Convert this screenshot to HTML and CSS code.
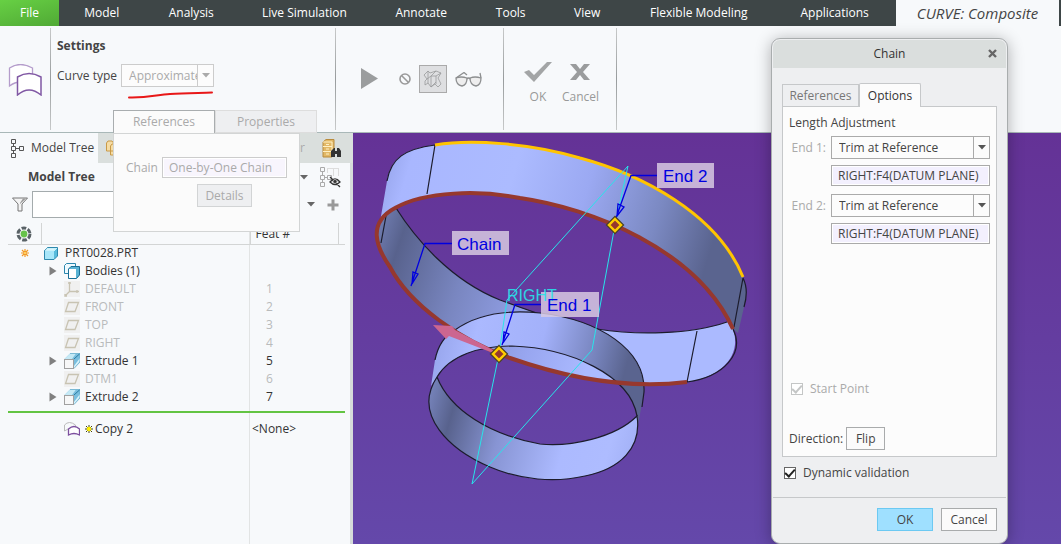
FILE: index.html
```html
<!DOCTYPE html>
<html lang="en">
<head>
<meta charset="utf-8">
<title>CURVE: Composite</title>
<link rel="stylesheet" href="styles.css">
</head>
<body>
<svg class="defs" width="0" height="0" aria-hidden="true">
  <defs>
    <symbol id="plane" viewBox="0 0 16 16"><rect width="16" height="16" fill="#f0f0f0"/><path d="M4.500 3.500H14.500L11 12.500H1.500Z" fill="none" stroke="#c8c3b2" stroke-width="1.300"/></symbol>
    <symbol id="extrude" viewBox="0 0 16 16"><path d="M6 .5H16V9L10 15V6H.5Z" fill="#79bede"/><path d="M.5 6L6 .5H12L8 6Z" fill="#c5e9f5"/><path d="M10 6L16 .5" stroke="#2c7ba0"/><path d="M10 13L16 5V8L10 15Z" fill="#d9f3fa"/><path d="M6 .5H16V9L10 15.500" fill="none" stroke="#5fa9c9" stroke-width=".7"/><rect x=".5" y="6.500" width="9" height="9" fill="#f7f7f7" stroke="#a0a0a0"/></symbol>
    <symbol id="tri" viewBox="0 0 8 10"><path d="M.5 .5L7.500 5L.5 9.500Z" fill="#808080"/></symbol>
    <symbol id="down" viewBox="0 0 8 5"><path d="M0 0H8L4 4.500Z" fill="currentColor"/></symbol>
  </defs>
</svg>
<div class="app">
  <nav class="menu">
    <a class="file" href="#">File</a><a href="#">Model</a><a href="#">Analysis</a><a href="#">Live Simulation</a><a href="#">Annotate</a><a href="#">Tools</a><a href="#">View</a><a href="#">Flexible Modeling</a><a href="#">Applications</a><a class="current" href="#">CURVE: Composite</a>
  </nav>

  <header class="ribbon">
    <div class="group feature">
      <svg width="34" height="32" viewBox="0 0 34 32" fill="none"><path d="M1.500 22V4Q12-3 24.500 4V22Q12 14 1.500 22Z" fill="#fff" stroke="#b49ccb" stroke-width="1.300"/><path d="M9.500 31V13Q21 6 33 13V31Q21 21 9.500 31Z" fill="#fff" stroke="#8058a4" stroke-width="1.500"/></svg>
    </div>
    <div class="group settings">
      <h2>Settings</h2>
      <div class="line">
        <label for="ctype">Curve type</label>
        <span class="combo off"><select id="ctype" disabled><option>Approximate</option></select><i><svg width="8" height="5"><use href="#down"/></svg></i></span>
      </div>
      <svg class="mark" width="86" height="8" viewBox="0 0 86 8"><path d="M1 6.500C20 7 28 4 42 3S70 2 84 1.500" fill="none" stroke="#e81818" stroke-width="2" stroke-linecap="round"/></svg>
      <div class="tabs">
        <button class="on" type="button">References</button><button type="button">Properties</button>
        <div class="slide">
          <div class="line"><label for="chain">Chain</label><input id="chain" class="collector" value="One-by-One Chain" disabled></div>
          <button class="details" type="button" disabled>Details</button>
        </div>
      </div>
    </div>
    <div class="group preview">
      <button type="button" aria-label="Resume"><svg width="17" height="22" viewBox="0 0 17 22"><path d="M0 0L17 10.500L0 21Z" fill="#9b9d9e"/></svg></button>
      <button class="none" type="button" aria-label="No preview"><svg width="12" height="12" viewBox="0 0 12 12" fill="none" stroke="#9a9a9a" stroke-width="1.600"><circle cx="6" cy="6" r="5"/><path d="M2.500 2.500L9.500 9.500"/></svg></button>
      <button type="button" class="pressed" aria-label="Feature preview"><svg width="20" height="18" viewBox="0 0 20 18" fill="none" stroke="#999b9c" stroke-width=".8"><path d="M1 5L5 1L7 3L13 1L18 3M18 14L15 17L12 14L8 17L5 13L2 15V11L4 9L1 5M5 1V13M8 6V17M8 6L13 1M13 12L8 17M13 6L18 3M13 6V14M4 9L8 6H13M18 3L15 8L18 14"/></svg></button>
      <button type="button" aria-label="Glasses"><svg width="27" height="15" viewBox="0 0 27 15" fill="#eee" stroke="#8d8f90" stroke-width="1.300"><path d="M1 6Q6 4 12 6Q12 13 7 14Q1 13 1 6ZM15 6Q20 4 26 6Q26 13 21 14Q15 13 15 6Z"/><path d="M12 7Q13.500 5 15 7M1 6L9 .5L12 3M26 6L25 1" fill="none"/></svg></button>
    </div>
    <div class="group commit">
      <button type="button"><svg width="28" height="20" viewBox="0 0 28 20"><path d="M0 10L5 8L10 13L23 0H28L10 20Z" fill="#a3a5a6"/></svg><span>OK</span></button>
      <button type="button"><svg width="20" height="20" viewBox="0 0 20 20"><path d="M0 2H6L10 7L14 2H20L13 10L20 18H14L10 13L6 18H0L7 10Z" fill="#9a9c9d"/></svg><span>Cancel</span></button>
    </div>
  </header>

  <main class="work">
    <aside class="side">
      <div class="navtabs">
        <button type="button" class="tree-tab"><svg width="13" height="19" viewBox="0 0 13 19" fill="none" stroke="#555"><path d="M.5 .5h4v4h-4zM.5 7.500h4v4h-4zM.5 14.500h4v4h-4zM8.500 7.500h4v4h-4zM2.500 4.500v3M2.500 11.500v3M4.500 9.500h4"/></svg>Model Tree</button>
        <svg width="16" height="17" viewBox="0 0 16 17" fill="#f5dca4" stroke="#c99a48"><path d="M.5 3L2 1H6L7.500 3V11H.5ZM4.500 6L6 4H14V15H4.500Z"/></svg>
        <span class="rest">or</span>
        <svg width="20" height="19" viewBox="0 0 20 19"><path d="M1 3L4 .5H12V15L10 18H1Z" fill="#e2b866" stroke="#b98b3c"/><path d="M1 7.500H10M1 12.500H10M10 3V18M1 3H10M4 5.500H7M4 10H7M4 15H7" stroke="#fff0c4"/><path d="M9 12L12 9H13V12H15V9H17L19 12V18H15V15H13V18H9Z" fill="#333"/></svg>
      </div>
      <div class="bar heading"><strong>Model Tree</strong><svg class="arrow" width="8" height="5"><use href="#down"/></svg>
        <svg width="21" height="21" viewBox="0 0 21 21" fill="none" stroke="#aaa"><path d="M.5 .5h4v4h-4zM.5 8.500h4v4h-4zM.5 15.500h4v4h-4zM7.500 8.500h4v4h-4zM2.500 4.500v4M2.500 12.500v3M4.500 10.500h3"/><path d="M7 1.500h12M7.500 1v5M13.500 1v8M18.500 1v8" stroke="#ddd"/><path d="M10 15Q15 9 20 15Q15 20 10 15ZM10 10L20 20" stroke="#333" stroke-width="1.300"/><circle cx="15" cy="14.500" r="2" fill="#333"/></svg></div>
      <div class="bar filter"><svg width="16" height="15" viewBox="0 0 16 15"><path d="M.5 1H15.500L10 7V14H6V7Z" fill="#f4f4f4" stroke="#777"/><path d="M8 7L14 1.500H11L8 6Z" fill="#999"/></svg>
        <input type="text" aria-label="Filter tree"><svg class="arrow" width="8" height="5"><use href="#down"/></svg>
        <svg width="12" height="12" viewBox="0 0 12 12"><path d="M6 .5V11.500M.5 6H11.500" stroke="#999" stroke-width="3"/></svg></div>
      <div class="treebox">
        <table>
          <colgroup><col class="c1"><col class="c2"><col class="c3"><col class="c4"></colgroup>
          <thead><tr><th><svg width="16" height="16" viewBox="0 0 16 16"><circle cx="8" cy="8" r="6" fill="none" stroke="#596266" stroke-width="3" stroke-dasharray="4.700 1.580"/><circle cx="8" cy="8" r="3.400" fill="#67c34a"/></svg></th><th></th><th>Feat #</th><th></th></tr></thead>
          <tbody>
            <tr><td class="status"><svg width="8" height="8" viewBox="0 0 8 8"><path d="M4 0V8M0 4H8M1 1L7 7M7 1L1 7" stroke="#f39a25" stroke-width="1.200"/><circle cx="4" cy="4" r="1" fill="#ffe27a"/></svg></td><td class="root"><div><svg width="14" height="13" viewBox="0 0 14 13"><path d="M.5 3.500L3.500 .5H13.500V9L10 12.500H.5Z" fill="#58bbdc" stroke="#2e88ad"/><path d="M1 4H10V12H1Z" fill="#a7e6f9"/><path d="M10 4L13 1M3 1.500H12L10 3.500H1.500Z" stroke="#c7f1fb" fill="#d9f5fc"/></svg>PRT0028.PRT</div></td><td></td><td></td></tr>
            <tr><td></td><td><div><svg class="tw" width="8" height="10"><use href="#tri"/></svg><svg width="16" height="16" viewBox="0 0 16 16"><path d="M.5 2.500L2.500 .5H11.500V10.500H.5Z" fill="#eefaff" stroke="#2b86ad"/><path d="M4.500 6L7 3.500H15.500V12L12.500 15.500H4.500Z" fill="#5ab3d4" stroke="#1b6f96"/><rect x="5" y="6" width="7" height="9" fill="#fff"/></svg>Bodies (1)</div></td><td></td><td></td></tr>
            <tr class="dim"><td></td><td><div class="leaf"><svg width="16" height="16" viewBox="0 0 16 16"><rect width="16" height="16" fill="#f0f0f0"/><path d="M5.500 1V10.500H15M5.500 10.500L1 15M4 2h3M13 9v3M1 13v2h2" fill="none" stroke="#c8c3b2" stroke-width="1.300"/></svg>DEFAULT</div></td><td>1</td><td></td></tr>
            <tr class="dim"><td></td><td><div class="leaf"><svg width="16" height="16"><use href="#plane"/></svg>FRONT</div></td><td>2</td><td></td></tr>
            <tr class="dim"><td></td><td><div class="leaf"><svg width="16" height="16"><use href="#plane"/></svg>TOP</div></td><td>3</td><td></td></tr>
            <tr class="dim"><td></td><td><div class="leaf"><svg width="16" height="16"><use href="#plane"/></svg>RIGHT</div></td><td>4</td><td></td></tr>
            <tr><td></td><td><div><svg class="tw" width="8" height="10"><use href="#tri"/></svg><svg width="16" height="16"><use href="#extrude"/></svg>Extrude 1</div></td><td>5</td><td></td></tr>
            <tr class="dim"><td></td><td><div class="leaf"><svg width="16" height="16"><use href="#plane"/></svg>DTM1</div></td><td>6</td><td></td></tr>
            <tr><td></td><td><div><svg class="tw" width="8" height="10"><use href="#tri"/></svg><svg width="16" height="16"><use href="#extrude"/></svg>Extrude 2</div></td><td>7</td><td></td></tr>
            <tr class="insert"><td colspan="4"><hr></td></tr>
            <tr class="new"><td></td><td><div class="leaf"><svg width="16" height="14" viewBox="0 0 16 14"><path d="M.5 9V3Q5-2 11.500 3V6M.5 9L4 7" fill="none" stroke="#bbb"/><path d="M4.500 13V7Q10 2 15.500 7V13Q10 10 4.500 13Z" fill="#fff" stroke="#7c4f9f" stroke-width="1.300"/></svg><svg class="star" width="8" height="8" viewBox="0 0 8 8"><path d="M4 0V8M0 4H8M1 1L7 7M7 1L1 7" stroke="#44440a"/><circle cx="4" cy="4" r="2.200" fill="#fff000"/></svg>Copy 2</div></td><td>&lt;None&gt;</td><td></td></tr>
          </tbody>
        </table>
      </div>
    </aside>

    <section class="view">
      <svg class="scene" viewBox="353 133 708 411" preserveAspectRatio="xMinYMin slice">
        <defs>
          <linearGradient id="top" gradientUnits="userSpaceOnUse" x1="380" y1="160" x2="740" y2="270"><stop offset="0" stop-color="#94a2e8"/><stop offset=".08" stop-color="#a9b7ff"/><stop offset=".35" stop-color="#acbbff"/><stop offset=".55" stop-color="#9ba9f2"/><stop offset=".75" stop-color="#7b89c2"/><stop offset=".91" stop-color="#5a648f"/><stop offset="1" stop-color="#5a648f"/></linearGradient>
          <linearGradient id="inner" gradientUnits="userSpaceOnUse" x1="376" y1="220" x2="610" y2="300"><stop offset="0" stop-color="#7380b5"/><stop offset=".12" stop-color="#58628d"/><stop offset=".4" stop-color="#7986c0"/><stop offset=".75" stop-color="#98a6f0"/><stop offset="1" stop-color="#abbaff"/></linearGradient>
          <linearGradient id="band" gradientUnits="userSpaceOnUse" x1="432" y1="330" x2="644" y2="385"><stop offset="0" stop-color="#94a2e9"/><stop offset=".2" stop-color="#abb9ff"/><stop offset=".5" stop-color="#a3b1fa"/><stop offset=".75" stop-color="#7784bd"/><stop offset=".9" stop-color="#5a648f"/></linearGradient>
          <linearGradient id="bowl" gradientUnits="userSpaceOnUse" x1="428" y1="400" x2="640" y2="460"><stop offset="0" stop-color="#7582b9"/><stop offset=".12" stop-color="#58628d"/><stop offset=".35" stop-color="#8794d3"/><stop offset=".65" stop-color="#acbaff"/><stop offset=".85" stop-color="#aebcff"/><stop offset="1" stop-color="#a0aef4"/></linearGradient>
        </defs>
        <path fill="url(#inner)" d="M396 208C415 238 450 280 500 300C530 311 565 324 597 329C635 335 690 335 727 322L733 329C742 355 722 377 687 382C630 389 570 379 510 358C460 340 410 305 390 267C376 247 367 223 396 208Z"/>
        <path fill="url(#top)" d="M387 181C391 158 405 149 435 145C470 139 530 143 580 158C640 174 717 213 743 277Q749 290 744 307L738 333L733 329C697 249 590 208 520 198C480 190 425 191 395 208C388 212 382 218 380 222Z"/>
        <g class="edge">
          <path d="M387 181C391 158 405 149 435 145L427 194M743 278Q749 290 744 307M743 278L734 327M386 216L381 243"/>
          <path d="M396 208C415 238 450 280 500 300C530 311 565 324 597 329C635 335 690 335 727 322M687 382C724 377 745 353 733 329M697 331L687 382"/>
        </g>
        <path fill="url(#band)" d="M437 377L431 386L435 360C438 345 446 335 455 330C480 312 510 310 540 313C600 320 646 350 644 392L638 425L637 416C630 375 570 348 512 346C480 346 450 355 437 377Z"/>
        <path fill="url(#bowl)" d="M437 377C450 410 490 435 540 444C570 447 615 438 637 416C642 448 620 469 585 476C555 483 520 480 490 467C450 450 412 415 437 377Z"/>
        <g class="edge">
          <path d="M435 360C438 345 446 335 455 330C480 312 510 310 540 313C600 320 646 350 644 392L642 407M637 416C630 375 570 348 512 346C480 346 450 355 437 377"/>
          <path d="M437 377C450 410 490 435 540 444C570 447 615 438 637 416C642 448 620 469 585 476C555 483 520 480 490 467C450 450 412 415 437 377"/>
        </g>
        <path class="brown" d="M687 382C630 389 570 379 510 358C460 340 410 305 390 267C376 247 367 223 395 208C425 191 480 190 520 198C590 208 697 249 733 329"/>
        <path class="yellow" d="M435 145C470 139 530 143 580 158C640 174 717 213 743 277"/>
        <path class="datum" d="M628 166L507 300L499 354L472 484L592 350L615 225L628 166"/>
        <path fill="#cc6690" d="M433 325L452 326L455 330L493 350L493 353L449 336L446 339Z"/>
        <g class="lead"><path d="M452 243.500H425L411 286M412 284L413 272L418 274ZM657 175.500H631L616 218M617 216L618 204L624 207ZM541 304.500H515L502 345M503 343L504 332L509 334Z"/></g>
        <g class="pick"><path d="M615 217L623 225L615 233L607 225Z"/><path d="M499 346L507 354L499 362L491 354Z"/></g>
        <g class="gold"><path d="M615 219L621 225L615 231L609 225Z"/><path d="M499 348L505 354L499 360L493 354Z"/></g>
        <g class="plate"><rect x="452" y="231" width="57" height="24"/><rect x="657" y="163" width="57" height="25"/><rect x="541" y="292" width="58" height="25"/></g>
        <text class="cyan" x="507" y="301">RIGHT</text>
        <g class="tag"><text x="457" y="250">Chain</text><text x="663" y="182">End 2</text><text x="547" y="311">End 1</text></g>
      </svg>
    </section>
  </main>

  <section class="dialog" role="dialog" aria-label="Chain">
    <div class="title"><span>Chain</span><button type="button" aria-label="Close"><svg width="9" height="9" viewBox="0 0 9 9"><path d="M1 1L8 8M8 1L1 8" stroke="#666" stroke-width="2.400"/></svg></button></div>
    <div class="body">
      <div class="dtabs"><button type="button">References</button><button class="on" type="button">Options</button></div>
      <div class="panel">
        <h3>Length Adjustment</h3>
        <div class="fields">
          <label for="e1">End 1:</label><span class="combo"><select id="e1"><option>Trim at Reference</option></select><i><svg width="8" height="5"><use href="#down"/></svg></i></span>
          <input class="collector" aria-label="End 1 reference" value="RIGHT:F4(DATUM PLANE)">
          <label for="e2">End 2:</label><span class="combo"><select id="e2"><option>Trim at Reference</option></select><i><svg width="8" height="5"><use href="#down"/></svg></i></span>
          <input class="collector" aria-label="End 2 reference" value="RIGHT:F4(DATUM PLANE)">
        </div>
        <label class="check off start"><input type="checkbox" checked disabled>Start Point</label>
        <div class="line direction"><span>Direction:</span><button class="btn" type="button">Flip</button></div>
      </div>
      <label class="check"><input type="checkbox" checked>Dynamic validation</label>
    </div>
    <div class="actions"><button class="btn primary" type="button">OK</button><button class="btn" type="button">Cancel</button></div>
  </section>
</div>
</body>
</html>
```
FILE: styles.css
```css
* { box-sizing: border-box; }
body { margin: 0; font: 12px/16px "Open Sans", "Noto Sans", sans-serif; color: #444; }
button, input, select { font: inherit; color: inherit; margin: 0; padding: 0; border: 0; background: none; border-radius: 0; }
svg { display: block; flex: none; }
h2, h3 { margin: 0; font-size: 12px; line-height: 16px; }
.defs { position: absolute; }
.app { position: relative; display: grid; grid-template-rows: 26px 107px 1fr; min-height: 100vh; background: #f7f9fb; overflow: hidden; }

.menu { display: grid; grid-template-columns: 59px 85fr 93fr 132fr 100fr 78fr 74fr 148fr 122fr 162fr; background: #3e4647; border-right: 2px solid #3e4647; }
.menu a { display: flex; align-items: center; justify-content: center; color: #fff; text-decoration: none; white-space: nowrap; }
.menu .file { background: linear-gradient(165deg, #67d044, #50a935); }
.menu .current { background: #f7f9fb; color: #444; font-size: 15px; font-style: italic; }

.ribbon { display: flex; border-bottom: 1px solid #a9b8b8; padding: 2px 0; }
.group { border-right: 1px solid; border-image: linear-gradient(#c8caca, #989c9d, #c8caca) 1; }
.feature { width: 51px; padding: 36px 0 0 8px; }
.settings { width: 285px; padding: 10px 0 0 6px; position: relative; }
.line { display: flex; align-items: center; gap: 4px; white-space: nowrap; }
.settings > .line { margin-top: 10px; }
.settings .combo { width: 93px; }
.mark { margin: 4px 0 0 71px; }
.combo { position: relative; display: block; border: 1px solid #aaa; height: 23px; background: #fcfcfc; }
.combo select { appearance: none; width: 100%; height: 21px; padding: 0 16px 0 7px; opacity: 1; }
.combo i { position: absolute; right: 0; top: 0; width: 16px; height: 21px; border-left: 1px solid #aaa; display: grid; place-items: center; pointer-events: none; color: #555; background: #fcfcfc; }
.combo.off, .combo.off i { border-color: #ccc; color: #aaa; }
.tabs { position: absolute; left: 62px; top: 82px; display: flex; z-index: 2; }
.tabs > button { width: 102px; height: 23px; border: 1px solid #ddd; background: #eeeff1; color: #aaa; }
.tabs > .on { border-color: #a9adaf; background: #fbfbfb; border-bottom: 0; }
.slide { position: absolute; top: 23px; left: 0; width: 187px; height: 99px; padding: 23px 12px; border: 1px solid #d3d5d5; background: #fbfbfb; color: #aaa; }
.collector { width: 100%; min-width: 0; height: 21px; border: 1px solid #aaa; background: #f3f0fe; box-shadow: inset 0 0 0 1px #fff; padding: 0 6px; }
.slide .collector { border-color: #ccc; background: #f8f5fd; }
.details { display: block; width: 55px; height: 23px; margin: 6px 0 0 71px; border: 1px solid #d2d4d5; background: #eeeff1; }
.preview { width: 168px; display: flex; align-items: center; padding: 0 0 0 25px; gap: 8px; }
.preview .pressed { width: 28px; height: 28px; border: 1px solid #aaa; background: #dedfe1; display: grid; place-items: center; }
.preview .none { margin-left: 13px; }
.commit { width: 113px; display: flex; justify-content: center; align-items: flex-start; gap: 10px; padding: 34px 0 0 3px; color: #999; }
.commit button { display: grid; justify-items: center; gap: 7px; }

.work { display: grid; grid-template-columns: 353px 1fr; min-height: 411px; }
.side { border-right: 3px solid #d5dbda; min-width: 0; display: flex; flex-direction: column; }
.navtabs { display: flex; align-items: center; height: 30px; background: #dadfdd; margin-right: -3px; padding-right: 11px; gap: 8px; }
.tree-tab { display: flex; align-items: center; gap: 7px; width: 98px; height: 30px; padding-left: 11px; background: #f7f9fb; white-space: nowrap; }
.rest { flex: 1; text-align: right; padding-right: 9px; color: #aaa; }
.bar { display: flex; align-items: center; }
.heading { height: 28px; padding: 0 9px 0 28px; gap: 12px; }
.heading strong { flex: 1; }
.arrow { color: #666; }
.filter { height: 27px; padding: 0 11px 0 12px; gap: 6px; }
.filter input { flex: 1; min-width: 0; height: 27px; border: 1px solid #a4abad; background: #fff; margin-right: 1px; margin-left: -2px; }
.filter .arrow + svg { margin-left: 6px; }
.treebox { flex: 1; margin: 5px 5px 0 8px; background: linear-gradient(#e2e4e4, #e2e4e4) 241px 0 / 1px 100% no-repeat; }
table { width: 100%; border-collapse: collapse; table-layout: fixed; color: #333; }
.c1 { width: 33px; } .c2 { width: 209px; } .c4 { width: 7px; }
th { height: 21px; padding: 2px 0 0; font-weight: normal; text-align: left; border-right: 1px solid #d3d5d5; border-bottom: 1px solid #d3d5d5; vertical-align: middle; line-height: 16px; }
th:first-child svg { margin-left: 8px; }
th:nth-child(3) { padding-left: 5px; }
th:last-child { border-right: 0; }
td { height: 18px; padding: 0; line-height: 16px; white-space: nowrap; }
td div { display: flex; align-items: center; gap: 5px; padding-left: 8px; }
td .tw { margin-right: 2px; }
td div.leaf { padding-left: 23px; }
td.root div { padding-left: 3px; gap: 7px; }
.status svg { margin-left: 13px; }
td:nth-child(3) { padding-left: 16px; }
.dim { color: #b9bbbc; }
.insert td { height: 11px; padding: 0; }
hr { margin: 1px 0 0; border: 0; height: 2px; background: #63c443; }
.new td { height: 23px; }
.new td:nth-child(3) { padding-left: 2px; }
.new .star { margin-right: -3px; }

.view { background: linear-gradient(#643296, #6448aa); min-width: 0; overflow: hidden; }
.scene { width: 100%; height: 100%; }
.edge path { fill: none; stroke: #1c1c2c; stroke-width: 1.2; }
.brown, .yellow { fill: none; stroke: #96382e; stroke-width: 4; }
.yellow { stroke: #ffc400; stroke-width: 3; }
.datum { fill: none; stroke: #28e4ea; stroke-width: 1; }
.cyan { fill: #28e4ea; font: 16px "Liberation Sans", sans-serif; opacity: .9; }
.lead path { fill: none; stroke: #0000e0; stroke-width: 1.3; }
.pick { fill: #96382e; stroke: #4a4226; stroke-width: 2; }
.gold { fill: #96382e; stroke: #ffce00; stroke-width: 2.4; }
.plate { fill: #d7c9e2; fill-opacity: .85; }
.tag { fill: #0000e0; font: 17px "Liberation Sans", sans-serif; }

.dialog { position: absolute; top: 38px; right: 53px; width: 237px; border: 1px solid #a9adae; border-radius: 9px; padding: 1px; background: #eeeff1; box-shadow: 0 2px 16px rgba(0, 0, 0, .3); z-index: 3; }
.title { position: relative; height: 28px; display: grid; place-items: center; background: #dadedd; border-radius: 7px 7px 0 0; color: #333; }
.title button { position: absolute; right: 9px; top: 9px; }
.body { padding: 15px 9px 16px; }
.dtabs { display: flex; align-items: flex-end; margin-bottom: -1px; position: relative; }
.dtabs button { width: 77px; height: 23px; border: 1px solid #c6c8ca; color: #777; }
.dtabs .on { width: 62px; height: 24px; background: #fcfcfc; border-bottom: 0; border-radius: 2px 2px 0 0; color: #333; }
.panel { border: 1px solid #c6c8ca; background: #fcfcfc; padding: 8px 6px 6px; }
.panel h3 { font-weight: normal; }
.fields { display: grid; grid-template-columns: 42px 1fr; row-gap: 6px; align-items: center; margin-top: 5px; }
.fields label { color: #aaa; text-align: right; padding-right: 5px; }
.fields .collector { grid-column: 2; margin-bottom: 2px; }
.check { display: flex; align-items: center; gap: 7px; margin: 8px 0 0 2px; }
.check input { appearance: none; width: 12px; height: 12px; border: 1px solid #666; background: #fff; display: grid; place-items: center; }
.check input::after { content: ""; width: 8px; height: 4px; border: solid #222; border-width: 0 0 2px 2px; transform: rotate(-48deg); margin-top: -3px; }
.check.off { color: #aaa; }
.check.off input, .check.off input::after { border-color: #c4c6c6; }
.check.start { margin: 135px 0 30px 2px; }
.direction { gap: 3px; }
.btn { height: 23px; min-width: 39px; border: 1px solid #a9abac; background: #fbfbfb; }
.actions { display: flex; justify-content: flex-end; gap: 8px; padding: 10px 9px 11px; border-top: 1px solid #c6c8ca; }
.actions .btn { width: 56px; }
.actions .primary { background: #9fe0ff; border-color: #6cc9f2; }
```
